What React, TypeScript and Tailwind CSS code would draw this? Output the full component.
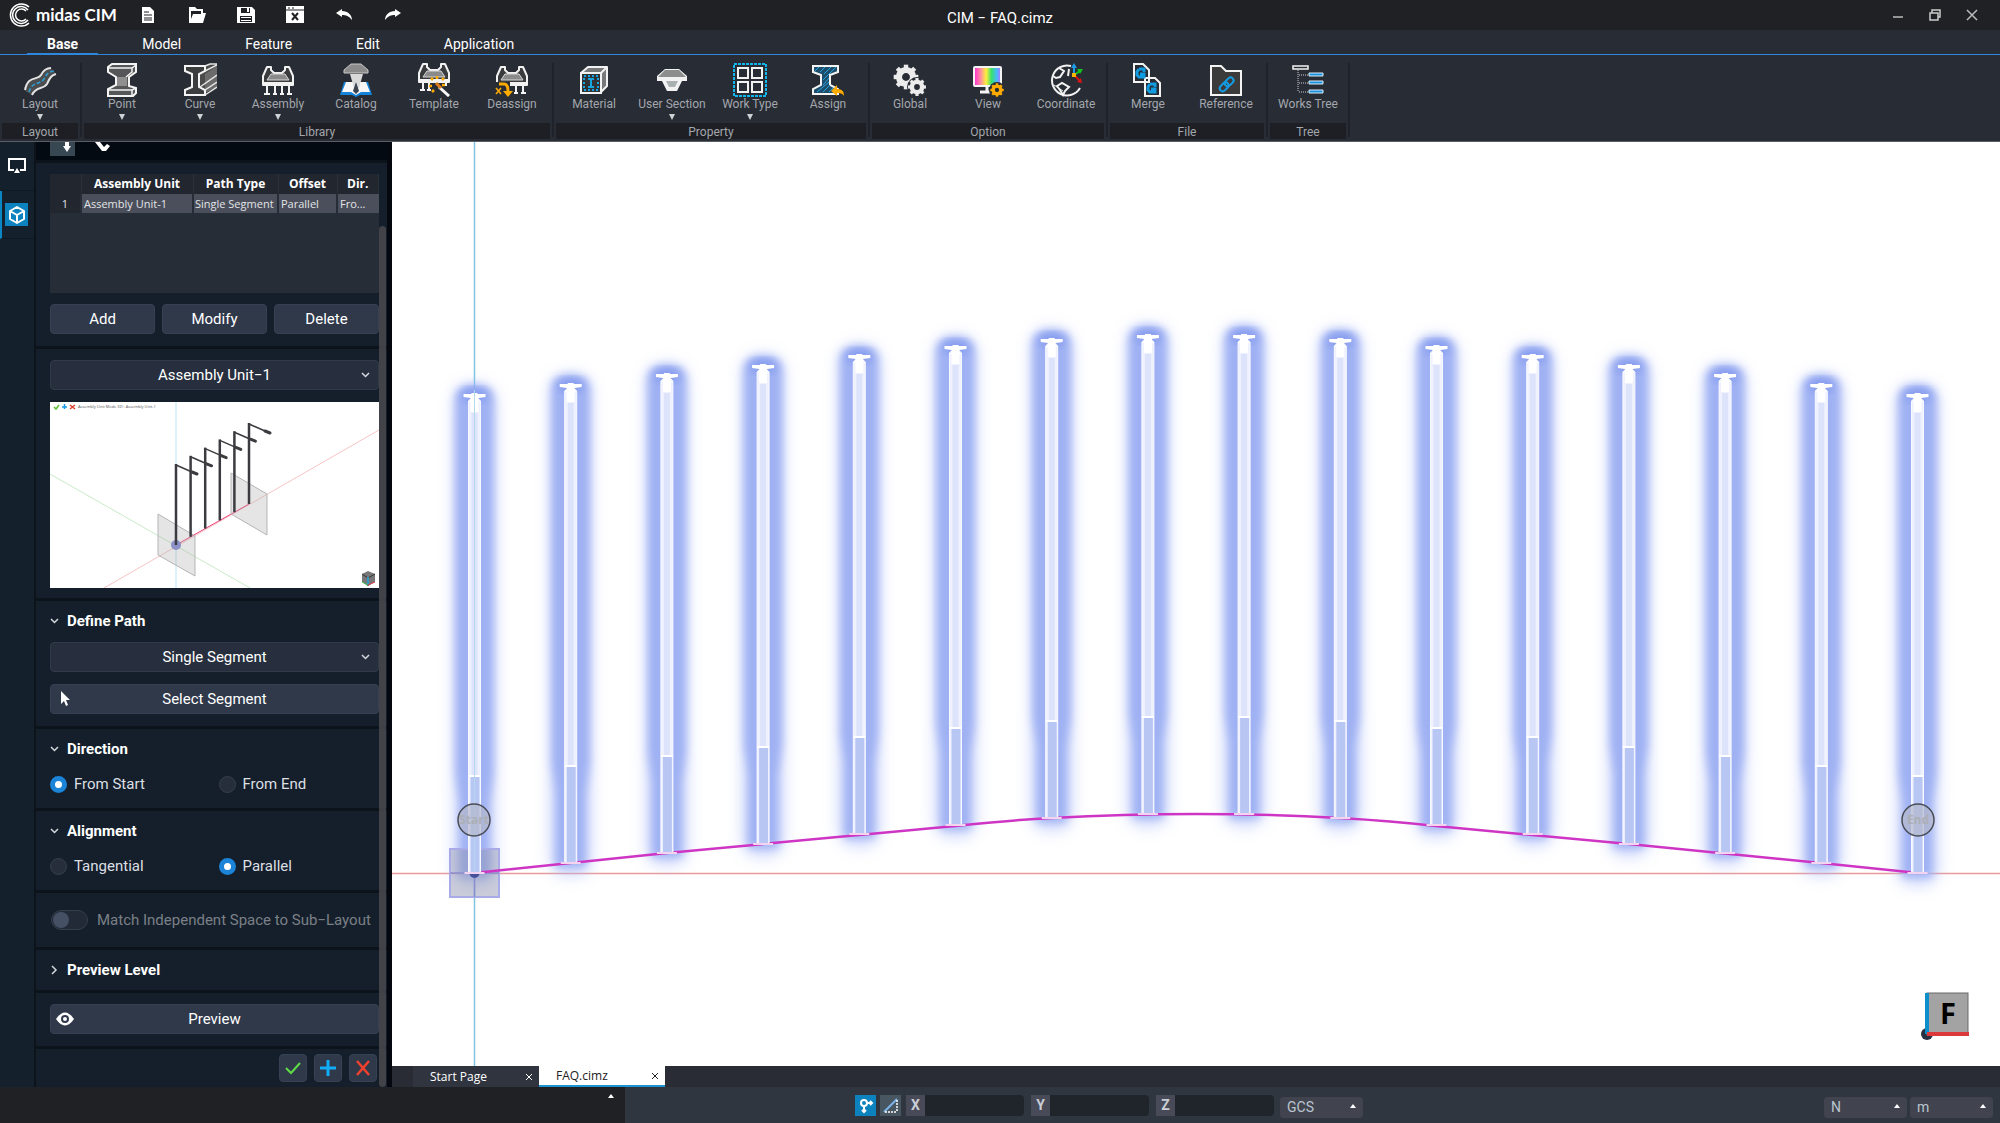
import type { ReactNode } from 'react';

const poles = [873, 863, 853, 844, 834, 825, 818, 814, 814, 818, 825, 834, 844, 853, 863, 873];

function Deck() {
  return (
    <>
      <path d="M2 13 L6 4 H10 V7 L13 10 H21 L24 7 V4 H28 L32 13 V22 H2 Z" fill="#3a3b3d" stroke="#f2f2f2" strokeWidth="2" strokeLinejoin="round" />
      <path d="M10 11 H24 L28 17 H6 Z" fill="#8a8a8a" stroke="#d8d8d8" strokeWidth="1" />
      <path d="M3 20 H31" stroke="#f2f2f2" strokeWidth="2" />
    </>
  );
}

function Piers() {
  return (
    <path d="M6 21 V31 M14 21 V31 M21 21 V31 M28 21 V31 M4 22 H8 M12 22 H16 M19 22 H23 M26 22 H30 M3 31 H9 M12 31 H16 M19 31 H23 M26 31 H31" stroke="#f2f2f2" strokeWidth="2" fill="none" />
  );
}

const gear = (cx: number, cy: number, r: number, fill: string) => (
  <g transform={`translate(${cx} ${cy})`}>
    <circle r={r * 0.64} fill="none" stroke={fill} strokeWidth={r * 0.56} />
    {[0, 45, 90, 135, 180, 225, 270, 315].map((a) => (
      <rect key={a} x={-r * 0.2} y={-r * 1.12} width={r * 0.4} height={r * 0.4} fill={fill} transform={`rotate(${a})`} />
    ))}
  </g>
);

const icons: Record<string, ReactNode> = {
  Layout: (
    <>
      <path d="M2 28 C4 12 14 18 18 12 C21 6 24 5 28 5 L33 11 C28 12 27 15 24 21 C20 27 12 23 9 32 Z" fill="#4c4d4f" />
      <path d="M2 27 C5 12 14 18 18 12 C21 6 24 5 28 5 M9 32 C13 23 20 27 24 21 C27 14 29 12 33 11" fill="none" stroke="#e4e4e4" strokeWidth="2" />
      <path d="M6 29 C9 18 17 22 21 16 C24 10 26 9 31 8" fill="none" stroke="#2a9fd6" strokeWidth="1.5" strokeDasharray="4 2" />
    </>
  ),
  Point: (
    <>
      <path d="M3 4 L7 1 H31 V9 L24 14 V23 L31 25 V30 L28 33 H3 V26 L11 22 V14 L3 9 Z" fill="#555657" stroke="#f4f4f4" strokeWidth="2" />
      <path d="M4 5 H27 L31 2 M27 5 V9 L21 14 M4 27 H27 L31 25 M27 27 V32" fill="none" stroke="#f4f4f4" strokeWidth="1.5" />
      <rect x="12" y="14" width="10" height="9" fill="#8f8f8f" />
    </>
  ),
  Curve: (
    <>
      <path d="M12 2 H34 V22 L20 32 H3 V27 L12 23 V11 L3 8 V4 Z" fill="#4b4b4c" />
      <path d="M22 11 L34 3 V24 L22 30 Z" fill="#6b6b6c" />
      <path d="M2 3 H22 V8 L16 11 V24 L22 27 V32 H2 V27 L9 24 V11 L2 8 Z" fill="#3c3d3f" stroke="#f4f4f4" strokeWidth="2" />
      <path d="M22 3 L27 1 H34 M22 8 L34 2 M17 24 L34 12 M22 27 L34 19 M22 32 L34 24" stroke="#e6e6e6" strokeWidth="1.5" fill="none" />
    </>
  ),
  Assembly: (
    <>
      <Deck />
      <Piers />
    </>
  ),
  Catalog: (
    <>
      <path d="M1 32 L5 19 H29 L33 32 H21 L17 34 L13 32 Z" fill="#1583d8" />
      <path d="M3 29 L7 19 H27 L31 29 H22 L17 32 L12 29 Z" fill="#f7f7f7" />
      <path d="M11 11 H24 L20 25 H15 Z" fill="#d9d9d9" />
      <path d="M17 19 L20 28 L17 31 L14 28 Z" fill="#3a4450" />
      <path d="M12 1 H22 L29 7 V10 H5 V7 Z" fill="#8b8b8b" stroke="#c9c9c9" strokeWidth="1" />
    </>
  ),
  Template: (
    <>
      <g transform="translate(0 -3)">
        <Deck />
        <path d="M6 21 V30 M12 21 V30 M29 21 V26 M3 30 H8 M10 30 H14" stroke="#f2f2f2" strokeWidth="2" />
      </g>
      <path d="M22 24 L32 33" stroke="#f7f7f7" strokeWidth="3" />
      <path d="M19 20 L24 25" stroke="#e07b1a" strokeWidth="3" />
      <path d="M20 13 V16 M14 15 L16 17 M27 15 L25 17 M12 23 H15 M25 22 H28 M15 29 L17 27" stroke="#ffab00" strokeWidth="2.5" />
    </>
  ),
  Deassign: (
    <>
      <Deck />
      <rect x="0" y="19" width="15" height="15" fill="#282c34" />
      <path d="M21 21 V30 M28 21 V30 M19 30 H23 M26 30 H31" stroke="#f2f2f2" strokeWidth="2" />
      <path d="M4 21 H9 C12 21 13 23 13 28" stroke="#ffab00" strokeWidth="3" fill="none" />
      <path d="M8 28 H18 L13 34 Z" fill="#ffab00" />
      <path d="M1 25 L6 31 M6 25 L1 31" stroke="#ffab00" strokeWidth="1.5" />
    </>
  ),
  Material: (
    <>
      <path d="M4 10 L11 4 H30 V23 L23 30 H4 Z" fill="#77787a" stroke="#f2f2f2" strokeWidth="2" strokeLinejoin="round" />
      <rect x="4" y="10" width="20" height="20" fill="#303236" stroke="#f2f2f2" strokeWidth="2" />
      <path d="M24 10 L30 4" stroke="#f2f2f2" strokeWidth="2" />
      <rect x="7" y="13" width="14" height="14" fill="none" stroke="#16a5e0" strokeWidth="2" strokeDasharray="2 2" />
      <path d="M11 16 H17 M14 16 V24 M11 24 H17" stroke="#16a5e0" strokeWidth="2" />
    </>
  ),
  'User Section': (
    <>
      <path d="M10 6 H24 L32 13 V18 H27 L22 28 H12 L7 18 H2 V13 Z" fill="#f2f2f2" />
      <path d="M10 7 H24 L31 14 H3 Z" fill="#8d8d8d" />
      <path d="M11 18 H23 L20 24 H14 Z" fill="#a9b0b0" />
    </>
  ),
  'Work Type': (
    <>
      <rect x="1" y="1" width="32" height="32" fill="none" stroke="#12b4ec" strokeWidth="2" strokeDasharray="3 1" />
      <path d="M5 5 H15 V15 H5 Z M19 5 H29 V15 H19 Z M5 19 H15 V29 H5 Z M19 19 H29 V29 H19 Z" fill="none" stroke="#f2f2f2" strokeWidth="2" />
    </>
  ),
  Assign: (
    <>
      <path d="M2 3 H27 V9 L19 12 V22 L27 26 V31 H2 V26 L10 22 V12 L2 9 Z" fill="#1d4e6b" stroke="#f4f4f4" strokeWidth="2" />
      <path d="M4 8 L8 4 M9 9 L14 4 M13 11 L20 4 M12 17 L25 4 M12 22 L18 15 M6 29 L18 19 M12 29 L19 22 M18 29 L22 25" stroke="#2aa2dc" strokeWidth="1" />
      <path d="M20 28 L26 22 V26 C31 26 33 28 33 33 C31 30 29 30 26 30 V33 Z" fill="#ffab00" />
    </>
  ),
  Global: (
    <>
      {gear(13, 14, 11, '#ececec')}
      <circle cx="24" cy="24" r="10" fill="#282c34" />
      {gear(24, 24, 8, '#ececec')}
    </>
  ),
  View: (
    <>
      <defs>
        <linearGradient id="spectrum">
          <stop offset="0" stopColor="#ff2ad0" />
          <stop offset="0.25" stopColor="#ff8fa0" />
          <stop offset="0.45" stopColor="#ffee3c" />
          <stop offset="0.65" stopColor="#38e070" />
          <stop offset="0.85" stopColor="#47b9ff" />
          <stop offset="1" stopColor="#c56bff" />
        </linearGradient>
      </defs>
      <rect x="3" y="4" width="27" height="19" rx="1" fill="url(#spectrum)" stroke="#f4f4f4" strokeWidth="2" />
      <path d="M16 23 V28 M9 29 H21" stroke="#f4f4f4" strokeWidth="3" />
      <circle cx="26" cy="27" r="8" fill="#282c34" />
      {gear(26, 27, 6, '#ffab00')}
    </>
  ),
  Coordinate: (
    <>
      <path d="M22 3 A15 15 0 1 0 31 25" fill="none" stroke="#f2f2f2" strokeWidth="2" />
      <path d="M10 5 L15 8 L11 14 L7 15 L4 13 M20 6 L19 13 M8 23 L13 20 L20 24 L16 28 L14 32 L11 27 Z" fill="none" stroke="#f2f2f2" strokeWidth="2" />
      <path d="M5 22 L14 28" stroke="#f2f2f2" strokeWidth="1" />
      <path d="M25 12 V4" stroke="#1e9be6" strokeWidth="2" />
      <path d="M25 0 L28 5 H22 Z" fill="#1e9be6" />
      <path d="M25 12 L31 8" stroke="#12c41c" strokeWidth="2" />
      <path d="M34 6 L31 11 L28 6 Z" fill="#12c41c" />
      <path d="M25 12 L31 18" stroke="#d81414" strokeWidth="2" />
      <path d="M33 20 L28 19 L32 15 Z" fill="#d81414" />
      <rect x="23" y="10" width="4" height="4" fill="#ffb400" />
    </>
  ),
  Merge: (
    <>
      <path d="M3 1 H12 L18 7 V19 H3 Z M14 15 H24 L29 20 V33 H14 Z" fill="#282c34" stroke="#f4f4f4" strokeWidth="2" />
      <path d="M8 6 H13 V9 M8 6 L6 9 V12 L8 14 H13 V11 H9 M19 21 H24 V24 M19 21 L17 24 V27 L19 29 H24 V26 H20" fill="none" stroke="#119be0" strokeWidth="3" />
    </>
  ),
  Reference: (
    <>
      <path d="M2 3 H12 L17 8 H32 V32 H2 Z" fill="#3b3b3c" stroke="#f4f4f4" strokeWidth="2" />
      <g transform="rotate(-45 18 21)" fill="none" stroke="#149de4" strokeWidth="2">
        <rect x="9" y="18" width="10" height="6" rx="3" />
        <rect x="16" y="18" width="10" height="6" rx="3" />
      </g>
    </>
  ),
  'Works Tree': (
    <>
      <path d="M2 3 H17 V6 H2 Z" fill="none" stroke="#f2f2f2" strokeWidth="1.5" />
      <path d="M7 7 V29 M8 12 H17 M8 20 H17 M8 29 H17" stroke="#cfcfcf" strokeWidth="1" strokeDasharray="1 1" />
      <path d="M18 10 H32 V13 H18 Z M18 18 H32 V21 H18 Z M18 27 H32 V30 H18 Z" fill="#1a92e0" stroke="#dcecf7" strokeWidth="1" />
    </>
  ),
};

const groups = [
  { name: 'Layout', items: ['Layout'], width: 'w-[78px]' },
  { name: 'Library', items: ['Point', 'Curve', 'Assembly', 'Catalog', 'Template', 'Deassign'], width: 'w-[468px]' },
  { name: 'Property', items: ['Material', 'User Section', 'Work Type', 'Assign'], width: 'w-[312px]' },
  { name: 'Option', items: ['Global', 'View', 'Coordinate'], width: 'w-[234px]' },
  { name: 'File', items: ['Merge', 'Reference'], width: 'w-[156px]' },
  { name: 'Tree', items: ['Works Tree'], width: 'w-[78px]' },
];

const withMenu = ['Layout', 'Point', 'Curve', 'Assembly', 'User Section', 'Work Type'];

const quickActions: { label: string; icon: ReactNode }[] = [
  {
    label: 'New',
    icon: (
      <>
        <path d="M4 2 H12 L16 6 V18 H4 Z" fill="#fff" />
        <path d="M6 7 H11 M6 10 H14 M6 13 H14 M6 15 H14" stroke="#202125" strokeWidth="1" />
      </>
    ),
  },
  {
    label: 'Open',
    icon: <path d="M2 2 H8 L10 4 H16 V8 H19 L16 18 H2 Z M4 6 V14 L6 9 H14 V6 Z" fill="#fff" fillRule="evenodd" />,
  },
  {
    label: 'Save',
    icon: <path d="M1 2 H16 L19 5 V18 H1 Z M5 3 V8 H14 V3 Z M4 11 V17 H16 V11 Z M11 3 V7 H13 V3 Z M5 12 H15 V13 H5 Z M5 15 H15 V16 H5 Z" fill="#fff" fillRule="evenodd" />,
  },
  {
    label: 'Close file',
    icon: (
      <>
        <path d="M1 1 H19 V18 H1 Z" fill="#fff" />
        <path d="M3 3 H5 M7 3 H9 M1 5 H19" stroke="#202125" strokeWidth="1" />
        <path d="M7 8 L13 15 M13 8 L7 15" stroke="#202125" strokeWidth="2" />
      </>
    ),
  },
  { label: 'Undo', icon: <path d="M2 8 L8 4 V6 C14 6 18 10 18 15 C15 11 12 10 8 10 V12 Z" fill="#fff" /> },
  { label: 'Redo', icon: <path d="M18 8 L12 4 V6 C6 6 2 10 2 15 C5 11 8 10 12 10 V12 Z" fill="#fff" /> },
];

function TitleBar() {
  return (
    <header className="grid h-[30px] shrink-0 grid-cols-[1fr_auto_1fr] items-center bg-[#202125]">
      <div className="flex items-center">
        <div className="flex w-[123px] items-center gap-1 pl-2">
          <svg viewBox="0 0 24 24" className="size-6" fill="none" stroke="#fff">
            <path d="M21 4 A11 11 0 1 0 21 20" strokeWidth="1.5" />
            <path d="M20 7 A8.5 8.5 0 1 0 20 17" strokeWidth="1.5" />
            <path d="M18 8 A6 6 0 1 0 18 16" strokeWidth="1.5" />
          </svg>
          <span className="font-[Lato] text-[17px] leading-5 font-bold whitespace-nowrap">midas CIM</span>
        </div>
        {quickActions.map(({ label, icon }) => (
          <button key={label} aria-label={label} className="flex w-[49px] justify-center">
            <svg viewBox="0 0 20 20" className="size-5">{icon}</svg>
          </button>
        ))}
      </div>
      <h1 className="pt-[6px] text-[15px] leading-5">CIM − FAQ.cimz</h1>
      <div className="flex justify-end pr-[10px]">
        <button aria-label="Minimize" className="flex w-[37px] justify-center">
          <svg viewBox="0 0 14 14" className="size-[14px]"><path d="M2 9 H12" stroke="#bbb" strokeWidth="1.5" /></svg>
        </button>
        <button aria-label="Restore" className="flex w-[37px] justify-center">
          <svg viewBox="0 0 14 14" className="size-[14px]" fill="none" stroke="#ccc" strokeWidth="1.5">
            <path d="M2 5 H10 V12 H2 Z M4 5 V2 H12 V9 H10" />
          </svg>
        </button>
        <button aria-label="Close" className="flex w-[37px] justify-center">
          <svg viewBox="0 0 14 14" className="size-[14px]"><path d="M2 2 L12 12 M12 2 L2 12" stroke="#bbb" strokeWidth="1.5" /></svg>
        </button>
      </div>
    </header>
  );
}

function Ribbon() {
  return (
    <>
      <nav className="flex h-[25px] shrink-0 gap-6 border-b border-[#2f86dd] bg-[#282c34] pl-[27px] text-sm leading-5">
        {['Base', 'Model', 'Feature', 'Edit', 'Application'].map((tab) => (
          <button
            key={tab}
            className={tab === 'Base' ? 'border-b border-[#2f86dd] px-5 pt-1 font-bold' : 'border-b border-transparent px-5 pt-1'}
          >
            {tab}
          </button>
        ))}
      </nav>
      <div className="flex h-[87px] shrink-0 border-b border-[#5a5c66] bg-[#282c34] pl-px text-xs text-[#a3a7ad]">
        {groups.map((group) => (
          <div key={group.name} className="flex">
            <section className={`flex flex-col ${group.width}`}>
              <div className="flex h-[68px] pt-2">
                {group.items.map((item) => (
                  <button key={item} className="flex w-[78px] flex-col items-center">
                    <svg viewBox="0 0 34 34" className="size-[34px]">{icons[item]}</svg>
                    <span className="leading-[14px] whitespace-nowrap">{item}</span>
                    {withMenu.includes(item) && (
                      <svg viewBox="0 0 6 6" className="mt-[3px] size-[6px]"><path d="M0 0 H6 L3 6 Z" fill="#cfd2d6" /></svg>
                    )}
                  </button>
                ))}
              </div>
              <h2 className="mx-px h-4 bg-[#1e1f24] text-center leading-[18px]">{group.name}</h2>
            </section>
            <div className="mx-px mt-2 mb-1 w-[2px] bg-[#1f2228]" />
          </div>
        ))}
      </div>
    </>
  );
}

function Chevron({ right }: { right?: boolean }) {
  return (
    <svg viewBox="0 0 10 10" className="size-[10px]" fill="none" stroke="#d5d8dc" strokeWidth="1.5">
      <path d={right ? 'M2 1 L6 5 L2 9' : 'M1 3 L4.500 6.500 L8 3'} />
    </svg>
  );
}

function Dropdown({ label, value }: { label: string; value: string }) {
  return (
    <div className="relative h-[30px]">
      <select aria-label={label} className="h-full w-full appearance-none rounded-sm border border-[#303a49] bg-[#272f3e] text-center text-[15px] [text-align-last:center]">
        <option>{value}</option>
      </select>
      <span className="pointer-events-none absolute top-[10px] right-2"><Chevron /></span>
    </div>
  );
}

function Heading({ children, right }: { children: string; right?: boolean }) {
  return (
    <h3>
      <button className="flex h-5 items-center gap-[7px] text-[15px] leading-5 font-bold">
        <Chevron right={right} />
        {children}
      </button>
    </h3>
  );
}

function Radio({ name, label, checked }: { name: string; label: string; checked?: boolean }) {
  return (
    <label className="flex h-5 w-[169px] items-center gap-[7px] text-[15px] text-[#dcdfe3]">
      <input
        type="radio"
        name={name}
        defaultChecked={checked}
        className="size-[17px] appearance-none rounded-full border border-[#363e4c] bg-[#262e3b] checked:border-[5px] checked:border-[#1b84d8] checked:bg-white"
      />
      {label}
    </label>
  );
}

const button = 'rounded-sm border border-[#364154] bg-[#2f394a] text-[15px] leading-5';

function Thumbnail() {
  return (
    <svg viewBox="0 0 329 186" className="mt-3 block h-[186px] w-full bg-white">
      <g fill="none" strokeWidth="1">
        <path d="M126 0 V186" stroke="#bfe3f5" />
        <path d="M0 72 L200 186" stroke="#c8ebc8" />
        <path d="M54 186 L329 28" stroke="#f7c4c4" />
        <path d="M126 143 L199 102" stroke="#f0407c" />
      </g>
      <path d="M108 112 L145 134 V174 L108 153 Z M181 71 L217 92 V133 L181 112 Z" fill="#a8a8a8" fillOpacity="0.3" stroke="#b5b5b5" />
      <circle cx="126" cy="143" r="5" fill="#8c92c8" />
      {[0, 1, 2, 3, 4, 5].map((i) => (
        <g key={i} transform={`translate(${126 + i * 14.6} ${143 - i * 8.2})`} fill="none" stroke="#3b3b40">
          <path d="M0 0 V-81" strokeWidth="2.5" />
          <path d="M0 -80 L16 -73" strokeWidth="1.5" />
          <path d="M16 -73 L21 -71" strokeWidth="3" strokeLinecap="round" />
        </g>
      ))}
      <path d="M4 5 L6 7 L9 3" fill="none" stroke="#5fbf3a" strokeWidth="1.5" />
      <path d="M12 5 H17 M14.500 2 V7" stroke="#1e9be6" strokeWidth="1.5" />
      <path d="M20 3 L25 7 M25 3 L20 7" stroke="#e04030" strokeWidth="1.5" />
      <text x="28" y="6" fontSize="4" fill="#555" fontFamily="Open Sans">Assembly Unit Mode 3D : Assembly Unit-1</text>
      <path d="M318 169 L325 172 V180 L318 184 L312 180 V172 Z" fill="#777" />
      <path d="M318 176 V184 M312 172 L318 176 L325 172" stroke="#333" fill="none" />
      <path d="M318 183 V175" stroke="#2bb3ea" strokeWidth="1.5" />
      <path d="M318 183 L325 180" stroke="#e04050" />
      <path d="M318 183 L312 180" stroke="#40c050" />
    </svg>
  );
}

function SidePanel() {
  return (
    <aside className="relative flex w-[351px] shrink-0 flex-col gap-[3px] overflow-hidden bg-[#0c131b]">
      <div className="flex h-[18px] shrink-0 gap-5 bg-[#030a12] pl-[14px]">
        <button aria-label="Pin panel" className="flex h-[14px] w-[25px] justify-center bg-[#374853] pl-2">
          <svg viewBox="0 0 10 12" className="h-3 w-[10px]"><path d="M3 0 H7 V4 H9 L5 10 L1 4 H3 Z" fill="#fff" /></svg>
        </button>
        <button aria-label="Filter" className="h-[10px] w-5">
          <svg viewBox="0 0 20 10" className="h-[10px] w-5"><path d="M0 0 H5 L9 5 L12 2 L15 4 L11 9 H7 Z" fill="#fff" /></svg>
        </button>
      </div>

      <section className="bg-[#141f2b] pt-[11px] pr-2 pb-3 pl-[14px]">
        <div className="h-[119px] bg-[#272d36]">
          <table className="w-full table-fixed border-collapse font-['Open_Sans'] text-xs">
            <thead>
              <tr className="h-5 bg-[#22262f] leading-5">
                <th className="w-[31px]" />
                <th className="w-[112px] border-x border-[#2a2f38]">Assembly Unit</th>
                <th className="w-[85px] border-x border-[#2a2f38]">Path Type</th>
                <th className="w-[59px] border-x border-[#2a2f38]">Offset</th>
                <th className="border-x border-[#2a2f38]">Dir.</th>
              </tr>
            </thead>
            <tbody>
              <tr className="h-[19px] text-[11px] leading-[18px] text-[#e3e5e8]">
                <th scope="row" className="bg-[#22262f] font-normal">1</th>
                <td className="border-x-2 border-[#272d36] bg-[#4a4f5b] pl-[2px]">Assembly Unit-1</td>
                <td className="border-x-2 border-[#272d36] bg-[#4a4f5b] pl-px whitespace-nowrap">Single Segment</td>
                <td className="border-x-2 border-[#272d36] bg-[#4a4f5b] pl-[2px]">Parallel</td>
                <td className="bg-[#4a4f5b] pl-[2px]">Fro...</td>
              </tr>
            </tbody>
          </table>
        </div>
        <div className="mt-[11px] grid h-[30px] grid-cols-3 gap-[7px]">
          <button className={button}>Add</button>
          <button className={button}>Modify</button>
          <button className={button}>Delete</button>
        </div>
      </section>

      <section className="bg-[#141f2b] pt-[11px] pr-2 pb-[10px] pl-[14px]">
        <Dropdown label="Assembly unit" value="Assembly Unit−1" />
        <Thumbnail />
      </section>

      <section className="bg-[#141f2b] pt-[10px] pr-2 pb-3 pl-[14px]">
        <Heading>Define Path</Heading>
        <div className="mt-[11px] flex flex-col gap-3">
          <Dropdown label="Path type" value="Single Segment" />
          <button className={`relative h-[30px] ${button}`}>
            <svg viewBox="0 0 12 16" className="absolute top-[6px] left-[9px] h-4 w-3"><path d="M1 0 V13 L4 10 L6 15 L8 14 L6 9 H10 Z" fill="#fff" /></svg>
            Select Segment
          </button>
        </div>
      </section>

      <section className="bg-[#141f2b] pt-[10px] pb-[14px] pl-[14px]">
        <Heading>Direction</Heading>
        <div className="mt-[15px] flex">
          <Radio name="direction" label="From Start" checked />
          <Radio name="direction" label="From End" />
        </div>
      </section>

      <section className="bg-[#141f2b] pt-[10px] pb-[14px] pl-[14px]">
        <Heading>Alignment</Heading>
        <div className="mt-[15px] flex">
          <Radio name="alignment" label="Tangential" />
          <Radio name="alignment" label="Parallel" checked />
        </div>
      </section>

      <section className="bg-[#141f2b] pt-[17px] pb-[17px] pl-[15px]">
        <label className="flex h-5 items-center gap-[9px] text-[15px] whitespace-nowrap text-[#7b8087]">
          <span className="relative flex h-5 w-[37px] shrink-0">
            <input type="checkbox" disabled className="peer h-5 w-[37px] appearance-none rounded-full border border-[#353e4d] bg-[#222a37]" />
            <span className="absolute top-[2px] left-[2px] size-4 rounded-full bg-[#455064] peer-checked:left-[19px]" />
          </span>
          Match Independent Space to Sub−Layout
        </label>
      </section>

      <section className="bg-[#141f2b] py-[10px] pl-[14px]">
        <Heading right>Preview Level</Heading>
      </section>

      <section className="bg-[#141f2b] pt-[11px] pr-2 pb-3 pl-[14px]">
        <button className={`relative block h-[30px] w-full ${button}`}>
          <svg viewBox="0 0 18 14" className="absolute top-[7px] left-[5px] h-[14px] w-[18px]">
            <path d="M0 7 Q9 -6 18 7 Q9 20 0 7 Z" fill="#fff" />
            <circle cx="9" cy="7" r="3" fill="#fff" stroke="#2f394a" strokeWidth="2" />
          </svg>
          Preview
        </button>
      </section>

      <section className="flex flex-1 justify-end gap-[7px] bg-[#141f2b] pt-[5px] pr-[10px]">
        <button aria-label="Apply and close" className={`flex size-7 items-center justify-center ${button}`}>
          <svg viewBox="0 0 16 16" className="size-4"><path d="M1 8 L6 13 L15 3" fill="none" stroke="#5fdc45" strokeWidth="2" /></svg>
        </button>
        <button aria-label="Apply" className={`flex size-7 items-center justify-center ${button}`}>
          <svg viewBox="0 0 16 16" className="size-4"><path d="M8 0 V16 M0 8 H16" stroke="#12aef5" strokeWidth="3" /></svg>
        </button>
        <button aria-label="Cancel" className={`flex size-7 items-center justify-center ${button}`}>
          <svg viewBox="0 0 16 16" className="size-4"><path d="M2 1 L14 15 M14 1 L2 15" stroke="#f0412e" strokeWidth="2.5" /></svg>
        </button>
      </section>

      {/* scroll thumb */}
      <div className="absolute top-[84px] right-[1px] bottom-0 w-[7px] rounded-full bg-[#46474b]/90" />
    </aside>
  );
}

function Pole({ x, base }: { x: number; base: number }) {
  return (
    <g transform={`translate(${x} ${base})`}>
      <path d="M-6 -472 L-4 -474 H4 L6 -472 V0 H-6 Z" fill="#eff2fe" stroke="#f8f9ff" strokeWidth="1" />
      <path d="M-3 -460 H3 V-97 H-3 Z" fill="#dde3fa" />
      <path d="M-4 -472 H4 V-461 H-4 Z" fill="#fff" />
      <path d="M-4 -96 H5 V0 H-4 Z" fill="#b8c6f4" />
      <path d="M-6 -97 H6" stroke="#fff" strokeWidth="2" />
      <path d="M-11 -479 H-3 V-480 H3 V-479 H11 V-476 L4 -475 V-473 L6 -471 H-6 L-4 -473 V-475 L-11 -476 Z" fill="#fff" />
      <path d="M-10 0 H10" stroke="#f3d3f0" strokeWidth="2" />
    </g>
  );
}

function Viewport() {
  const points = poles.map((base, i) => ({ x: 82.5 + i * 96.2, base: base - 142 }));
  return (
    <svg viewBox="0 0 1608 924" preserveAspectRatio="xMinYMin slice" className="block min-h-0 w-full flex-1 bg-white">
      <defs>
        <filter id="glow" x="-150%" y="-10%" width="400%" height="120%">
          <feGaussianBlur stdDeviation="4" />
        </filter>
        <filter id="haze" x="-200%" y="-10%" width="500%" height="120%">
          <feGaussianBlur stdDeviation="8" />
        </filter>
      </defs>
      <path d="M0 731.500 H1608" stroke="#ea9a9a" strokeWidth="1.5" />
      <path d="M82.500 0 V924" stroke="#7fc6e0" strokeWidth="1.5" />
      {points.map(({ x, base }) => (
        <g key={x}>
          <rect x={x - 20} y={base - 488} width="40" height="500" rx="16" fill="#a9b9f8" opacity="0.6" filter="url(#haze)" />
          <path
            d={`M${x - 19} ${base - 474} Q${x - 19} ${base - 488} ${x} ${base - 488} Q${x + 19} ${base - 488} ${x + 19} ${base - 474} V${base - 100} L${x + 15} ${base - 70} V${base + 4} H${x - 15} V${base - 70} L${x - 19} ${base - 100} Z`}
            fill="#9fb1f3"
            filter="url(#glow)"
          />
          <ellipse cx={x} cy={base - 478} rx="13" ry="8" fill="#7f96ee" opacity="0.7" filter="url(#glow)" />
        </g>
      ))}
      <rect x="58" y="707" width="49" height="48" fill="#8b90ae" fillOpacity="0.45" stroke="#a8abe8" strokeWidth="2" />
      <path d="M82.500 707 V755 M58 731 H107" stroke="#8d8fd0" strokeWidth="1.5" />
      <circle cx="82.500" cy="731" r="5" fill="#44509a" />
      <path
        d="M82.500 731 L275 711 L467 693 L563 684 Q620 678 660 676 Q804 668 948 676 Q1000 679 1044 684 L1237 702 L1429 721 L1526 731"
        fill="none"
        stroke="#cf35c4"
        strokeWidth="2.5"
      />
      {points.map(({ x, base }) => (
        <Pole key={x} x={x} base={base} />
      ))}
      <path d="M82.500 248 V731" stroke="#b5daf0" strokeWidth="1" />
      <g fontFamily="Open Sans" fontSize="12" fontWeight="700" textAnchor="middle">
        <circle cx="82" cy="678" r="16" fill="#b4b8cc" fillOpacity="0.7" stroke="#4a4c55" strokeWidth="1.5" />
        <text x="82" y="682" fill="#adafb6">Start</text>
        <circle cx="1526" cy="678" r="16" fill="#b4b8cc" fillOpacity="0.7" stroke="#4a4c55" strokeWidth="1.5" />
        <text x="1526" y="682" fill="#adafb6">End</text>
      </g>
      {/* view cube */}
      <circle cx="1535" cy="892" r="6" fill="#273142" />
      <rect x="1535" y="851" width="41" height="42" fill="#a3a3a3" stroke="#6b6b6b" strokeWidth="1" />
      <path d="M1535 851 V892" stroke="#0d8fcc" strokeWidth="4" />
      <path d="M1535 892 H1577" stroke="#dc3a3a" strokeWidth="4" />
      <text x="1556" y="882" textAnchor="middle" fontFamily="Open Sans" fontSize="29" fontWeight="700" fill="#000">F</text>
    </svg>
  );
}

function UnitSelect({ label, value }: { label: string; value: string }) {
  return (
    <div className="relative h-[21px] w-[83px]">
      <select aria-label={label} className="h-full w-full appearance-none rounded-sm bg-[#41444f] pl-[7px] text-sm text-[#b9c4d0]">
        <option>{value}</option>
      </select>
      <svg viewBox="0 0 6 4" className="pointer-events-none absolute top-[9px] right-[7px] h-1 w-[6px]"><path d="M0 4 L3 0 L6 4 Z" fill="#fff" /></svg>
    </div>
  );
}

function StatusBar() {
  return (
    <footer className="flex h-9 shrink-0 bg-[#303640]">
      <div className="flex w-[625px] shrink-0 justify-end bg-[#202125] pt-[7px] pr-[11px]">
        <button aria-label="Expand log" className="h-1 w-[6px]">
          <svg viewBox="0 0 6 4" className="block h-1 w-[6px]"><path d="M0 4 L3 0 L6 4 Z" fill="#fff" /></svg>
        </button>
      </div>
      <div className="flex flex-1 items-start pt-2 pr-[7px] pl-[230px]">
        <button aria-label="Snap to point" className="flex size-[21px] items-center justify-center bg-[#0c82bf]">
          <svg viewBox="0 0 16 16" className="size-4" fill="none" stroke="#fff" strokeWidth="2">
            <circle cx="6" cy="5" r="3" />
            <path d="M9 5 H14 M12 3 L14 5 L12 7 M6 8 V14 M4 12 L6 14 L8 12" />
          </svg>
        </button>
        <button aria-label="Snap to angle" className="ml-1 flex size-[21px] items-center justify-center bg-[#475661]">
          <svg viewBox="0 0 16 16" className="size-4" fill="none">
            <path d="M1 14 L14 1" stroke="#7db4e8" strokeWidth="2" />
            <path d="M14 2 V14 M2 14 H14" stroke="#fff" strokeWidth="1.5" strokeDasharray="2 1" />
          </svg>
        </button>
        <div className="ml-[5px] flex gap-[7px]">
          {['X', 'Y', 'Z'].map((axis) => (
            <label key={axis} className="flex h-[21px] text-sm leading-[21px] font-bold text-[#c9ced6]">
              <span className="w-[19px] bg-[#484b57] text-center">{axis}</span>
              <input className="w-[99px] rounded-r-sm bg-[#20242b] px-1 font-normal" />
            </label>
          ))}
        </div>
        <div className="ml-[6px] flex-1"><UnitSelect label="Coordinate system" value="GCS" /></div>
        <div className="flex gap-[3px]">
          <UnitSelect label="Force unit" value="N" />
          <UnitSelect label="Length unit" value="m" />
        </div>
      </div>
    </footer>
  );
}

function App() {
  return (
    <div className="flex h-screen flex-col overflow-hidden bg-[#202125] font-[Roboto,sans-serif] text-white">
      <TitleBar />
      <Ribbon />
      <main className="flex min-h-0 flex-1 bg-[#05090f]">
        <div className="flex w-[34px] shrink-0 flex-col bg-[#14202c]">
          <button aria-label="Display" className="flex h-[49px] items-center justify-center border-b border-[#0f1822]">
            <svg viewBox="0 0 18 16" className="h-4 w-[18px]">
              <path d="M6 12 H1 V1 H17 V12 H12" fill="none" stroke="#fff" strokeWidth="2" />
              <path d="M9 10 L12 15 H6 Z" fill="#fff" />
            </svg>
          </button>
          <button aria-label="Assembly" className="flex h-12 items-center border-b border-l-2 border-b-[#0f1822] border-l-[#0b86c5] pl-[3px]">
            <span className="flex size-[23px] items-center justify-center bg-[#0c82bf]">
              <svg viewBox="0 0 18 18" className="size-[18px]" fill="none" stroke="#fff" strokeWidth="2" strokeLinejoin="round">
                <path d="M9 1 L16 5 V13 L9 17 L2 13 V5 Z M2 5 L9 9 L16 5 M9 9 V17" />
              </svg>
            </span>
          </button>
        </div>
        <div className="w-[2px] shrink-0 bg-[#0c131b]" />
        <SidePanel />
        <div className="w-[5px] shrink-0" />
        <div className="flex min-w-0 flex-1 flex-col">
          <Viewport />
          <div className="flex h-[21px] shrink-0 bg-[#292c34] pl-[21px] font-['Open_Sans'] text-xs leading-5">
            <div className="flex w-[126px] justify-between bg-[#30343e] pr-[6px] pl-[17px]">
              <button>Start Page</button>
              <button aria-label="Close Start Page">
                <svg viewBox="0 0 8 8" className="size-2"><path d="M1 1 L7 7 M7 1 L1 7" stroke="#fff" strokeWidth="1" /></svg>
              </button>
            </div>
            <div className="flex w-[126px] justify-between border-b-2 border-[#1c94d2] bg-white pr-[6px] pl-[17px] text-[#222]">
              <button>FAQ.cimz</button>
              <button aria-label="Close FAQ.cimz">
                <svg viewBox="0 0 8 8" className="size-2"><path d="M1 1 L7 7 M7 1 L1 7" stroke="#222" strokeWidth="1" /></svg>
              </button>
            </div>
          </div>
        </div>
      </main>
      <StatusBar />
    </div>
  );
}

export default App;
